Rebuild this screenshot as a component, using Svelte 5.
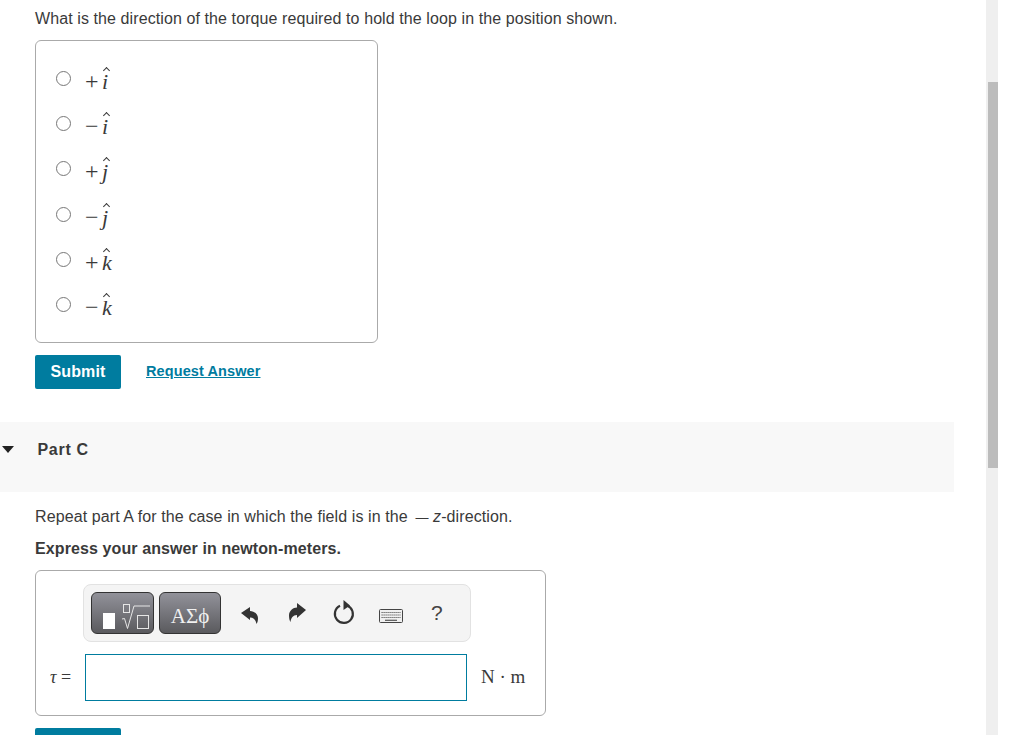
<script>
  const options = [
    { sign: "+", letter: "i" },
    { sign: "−", letter: "i" },
    { sign: "+", letter: "j" },
    { sign: "−", letter: "j" },
    { sign: "+", letter: "k" },
    { sign: "−", letter: "k" },
  ];
</script>

<div class="page">
  <div class="main">
    <p class="question">What is the direction of the torque required to hold the loop in the position shown.</p>

    <div class="choices">
      {#each options as opt}
        <div class="choice">
          <span class="radio"></span>
          <span class="math"><span class="sign">{opt.sign}</span><i class="letter">{opt.letter}</i></span>
        </div>
      {/each}
    </div>

    <div class="actions">
      <button class="submit">Submit</button>
      <span class="link">Request Answer</span>
    </div>

    <div class="part">
      <span class="arrow"></span>
      <span class="part-title">Part C</span>
    </div>

    <p class="repeat">Repeat part A for the case in which the field is in the <span class="dash">—</span> <i>z</i>-direction.</p>
    <p class="express">Express your answer in newton-meters.</p>

    <div class="answer">
      <div class="toolbar">
        <div class="tool-btn templates">
          <svg width="61" height="40" viewBox="1 1 61 40">
            <rect x="12" y="21" width="12" height="16" fill="#fff" />
            <g fill="none" stroke="#e6e6e6" stroke-width="1">
              <rect x="32.500" y="12.500" width="6" height="8" />
              <path d="M31 27l2.500-.5 3 10 6.500-22.500h16" />
              <rect x="46.500" y="23.500" width="11" height="13" />
            </g>
          </svg>
        </div>
        <div class="tool-btn symbols">ΑΣϕ</div>
        <div class="tools">
          <svg class="undo" width="20" height="20" viewBox="0 0 20 20">
            <path d="M1 8 10 2v4c4 0 8 3 8 7 0 2.500-.5 4.500-1.500 6-.5-3.500-2.500-6.500-6.500-6.500V15z" fill="#333" />
          </svg>
          <svg class="redo" width="20" height="22" viewBox="0 0 20 22">
            <path d="M19 8 10 1v4.500c-4 0-8 3.500-8 8 0 2.500.5 5 1.500 6.500.5-4 2.500-7 6.500-7v3z" fill="#333" />
          </svg>
          <svg class="reset" width="24" height="26" viewBox="0 0 24 26">
            <path d="M15 6.500a9 9 0 1 1-7 .3" fill="none" stroke="#333" stroke-width="2.200" />
            <path d="M11.500 1l6.500 5.500-6.500 4.500z" fill="#333" />
          </svg>
          <svg class="keyboard" width="26" height="16" viewBox="0 0 26 16">
            <rect x="1.500" y="1.500" width="23" height="13" rx="1" fill="#f0f0f0" stroke="#444" stroke-width="1" />
            <path d="M3.500 4.500h19M3.500 7h19M3.500 9.500h19" stroke="#555" stroke-width="1.200" stroke-dasharray="1.200 .8" />
            <path d="M7 12.300h12" stroke="#555" stroke-width="1.200" />
          </svg>
          <span class="help">?</span>
        </div>
      </div>
      <div class="entry">
        <span class="tau"><i>τ</i> =</span>
        <div class="input"></div>
        <span class="unit">N · m</span>
      </div>
    </div>

    <button class="submit next"></button>
  </div>
  <div class="scrollbar"><div class="thumb"></div></div>
</div>

<style>
  :global(body) {
    margin: 0;
    background: #fff;
    overflow: hidden;
  }
  .page {
    display: flex;
    width: 1010px;
    height: 735px;
    overflow: hidden;
    font-family: "Liberation Sans", Arial, sans-serif;
    font-size: 16px;
    color: #3a3a3a;
  }
  .main {
    width: 954px;
    flex: none;
  }
  p {
    margin: 0;
    line-height: 20px;
  }
  .question {
    padding: 9px 0 0 35px;
    height: 40px;
    box-sizing: border-box;
    letter-spacing: 0.094px;
  }
  .choices {
    margin-left: 35px;
    width: 343px;
    height: 303px;
    box-sizing: border-box;
    border: 1px solid #aaa;
    border-radius: 6px;
    padding-top: 15px;
  }
  .choice {
    display: flex;
    align-items: center;
    height: 45.2px;
    padding-left: 20px;
  }
  .radio {
    width: 15px;
    height: 15px;
    box-sizing: border-box;
    border: 1.5px solid #777;
    border-radius: 50%;
    background: #fff;
  }
  .math {
    margin-left: 14px;
    margin-top: 6px;
    font-family: "Liberation Serif", "Times New Roman", serif;
    font-size: 22px;
    line-height: 24px;
    display: flex;
    align-items: baseline;
  }
  .sign {
    width: 16px;
    font-size: 24px;
  }
  .letter {
    position: relative;
    display: inline-block;
    width: 12px;
    padding-left: 1px;
    font-style: italic;
  }
  .letter::before {
    content: "";
    position: absolute;
    left: 3px;
    top: -2px;
    width: 5px;
    height: 5px;
    box-sizing: border-box;
    border-top: 1px solid #3a3a3a;
    border-left: 1px solid #3a3a3a;
    transform: rotate(45deg);
  }
  .actions {
    display: flex;
    align-items: center;
    margin: 12px 0 0 35px;
  }
  .submit {
    width: 86px;
    height: 34px;
    border: 0;
    padding: 0;
    border-radius: 2px;
    background: #007c9f;
    color: #fff;
    font: bold 16px "Liberation Sans", Arial, sans-serif;
    letter-spacing: 0.1px;
  }
  .link {
    margin-left: 25px;
    color: #007c9f;
    font-size: 14.5px;
    font-weight: bold;
    text-decoration: underline;
    letter-spacing: 0.1px;
    padding-bottom: 2px;
  }
  .part {
    display: flex;
    align-items: flex-start;
    height: 70px;
    margin-top: 33px;
    background: #f8f8f8;
  }
  .arrow {
    width: 0;
    height: 0;
    margin: 24px 0 0 2px;
    border-left: 6.500px solid transparent;
    border-right: 6.500px solid transparent;
    border-top: 7px solid #222;
  }
  .part-title {
    margin: 18px 0 0 23.500px;
    font-weight: bold;
    line-height: 20px;
    letter-spacing: 0.7px;
  }
  .repeat {
    margin: 15px 0 0 35px;
    letter-spacing: 0.1px;
  }
  .dash {
    font-size: 13px;
    line-height: 0;
    margin: 0 0 0 3px;
  }
  .express {
    margin: 12px 0 0 35px;
    font-weight: bold;
    letter-spacing: 0.1px;
  }
  .answer {
    margin: 11px 0 0 35px;
    width: 511px;
    height: 146px;
    box-sizing: border-box;
    border: 1px solid #aaa;
    border-radius: 6px;
    padding: 13px 0 0 47px;
  }
  .toolbar {
    display: flex;
    align-items: center;
    width: 388px;
    height: 58px;
    box-sizing: border-box;
    border: 1px solid #e2e2e2;
    border-radius: 8px;
    background: #f4f4f4;
    padding-left: 7px;
    gap: 5px;
  }
  .tool-btn {
    width: 63px;
    height: 42px;
    box-sizing: border-box;
    border: 1px solid #333;
    border-radius: 6px;
    background: linear-gradient(#92929a, #5a5a5e);
    color: #fff;
  }
  .templates svg {
    display: block;
  }
  .symbols {
    width: 62px;
    font-family: "Liberation Serif", "Times New Roman", serif;
    font-size: 21px;
    text-align: center;
    line-height: 47px;
    color: #f0f0f0;
  }
  .tools {
    display: flex;
    align-items: center;
    margin-left: 14px;
  }
  .undo { margin-top: 3px; }
  .redo { margin: 0 0 0 27px; }
  .reset { margin: -2px 0 0 25px; }
  .keyboard { margin: 5px 0 0 22px; }
  .help {
    margin: 0 0 0 27px;
    font-size: 21px;
    color: #444;
    line-height: 20px;
  }
  .entry {
    display: flex;
    align-items: center;
    margin: 12px 0 0 -47px;
  }
  .tau {
    width: 49px;
    box-sizing: border-box;
    padding-left: 14px;
    font-family: "Liberation Serif", "Times New Roman", serif;
    font-size: 18px;
  }
  .input {
    width: 382px;
    height: 47px;
    box-sizing: border-box;
    border: 1px solid #007c9f;
    background: #fff;
  }
  .unit {
    margin: 0 0 2px 14px;
    font-family: "Liberation Serif", "Times New Roman", serif;
    font-size: 19px;
    white-space: nowrap;
  }
  .next {
    display: block;
    margin: 12px 0 0 35px;
  }
  .scrollbar {
    width: 12px;
    height: 735px;
    margin-left: 32px;
    background: #efefef;
    flex: none;
  }
  .thumb {
    width: 10px;
    height: 386px;
    margin: 82px 0 0 2px;
    background: #bcbcbc;
  }
</style>
